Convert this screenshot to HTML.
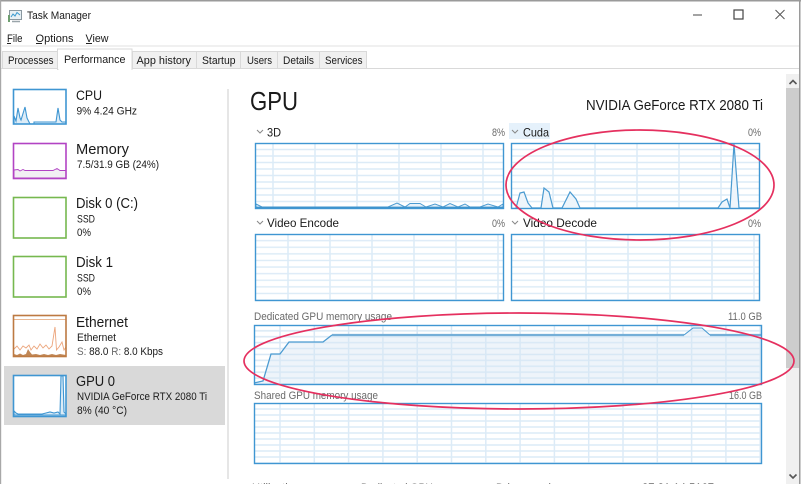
<!DOCTYPE html>
<html><head><meta charset="utf-8"><title>Task Manager</title>
<style>
html,body{margin:0;padding:0;background:#fff;width:801px;height:484px;overflow:hidden}
svg{display:block;filter:blur(0.35px)}
text{font-family:"Liberation Sans",sans-serif;fill:#1a1a1a}
.g{fill:#6a6a6a}
</style></head><body>
<svg width="801" height="484" viewBox="0 0 801 484" xmlns="http://www.w3.org/2000/svg">
<defs>
<pattern id="p3d" patternUnits="userSpaceOnUse" x="252" y="139.75" width="42" height="6.5"><path d="M0 3.25H42M21 0V6.5" stroke="#dcebf7" stroke-width="1.5" fill="none"/></pattern>
<pattern id="pcu" patternUnits="userSpaceOnUse" x="532" y="139.75" width="42" height="6.5"><path d="M0 3.25H42M21 0V6.5" stroke="#dcebf7" stroke-width="1.5" fill="none"/></pattern>
<pattern id="pen" patternUnits="userSpaceOnUse" x="267" y="230.75" width="42" height="6.6"><path d="M0 3.3H42M21 0V6.6" stroke="#dcebf7" stroke-width="1.5" fill="none"/></pattern>
<pattern id="pde" patternUnits="userSpaceOnUse" x="523" y="230.75" width="42" height="6.6"><path d="M0 3.3H42M21 0V6.6" stroke="#dcebf7" stroke-width="1.5" fill="none"/></pattern>
<pattern id="pme" patternUnits="userSpaceOnUse" x="262.85" y="322" width="34.3" height="5.9"><path d="M0 2.95H34.3M17.15 0V5.9" stroke="#d8e8f5" stroke-width="1.5" fill="none"/></pattern>
<pattern id="psh" patternUnits="userSpaceOnUse" x="262.85" y="400" width="34.3" height="6"><path d="M0 3H34.3M17.15 0V6" stroke="#dcebf7" stroke-width="1.5" fill="none"/></pattern>
</defs>

<!-- window frame -->
<rect x="0" y="0" width="801" height="1.5" fill="#9a9a9a"/>
<rect x="0" y="0" width="1.2" height="484" fill="#a8a8a8"/>
<rect x="799" y="0" width="1.5" height="484" fill="#9a9a9a"/>

<!-- title bar -->
<rect x="9.5" y="10.5" width="12" height="9" fill="#e8f0f4" stroke="#8a98a0" stroke-width="1"/>
<path d="M11 17L13 14L15 16L17 12.5L20 15" fill="none" stroke="#3a9ad0" stroke-width="1"/>
<rect x="8" y="15" width="2" height="7" fill="#6f9f70"/>
<path d="M12 21.5H20" stroke="#9aa5aa" stroke-width="1.5"/>
<text x="27" y="19" font-size="11" textLength="64" lengthAdjust="spacingAndGlyphs">Task Manager</text>
<path d="M693 15H702" stroke="#666" stroke-width="1.2"/>
<rect x="734" y="10" width="9" height="9" fill="none" stroke="#444" stroke-width="1.2"/>
<path d="M775.5 10L784.5 19M784.5 10L775.5 19" stroke="#555" stroke-width="1" fill="none"/>

<!-- menu -->
<text x="7" y="42" font-size="11" textLength="15.5" lengthAdjust="spacingAndGlyphs">File</text>
<path d="M7 43.5H11" stroke="#222"/>
<text x="35.5" y="42" font-size="11" textLength="38" lengthAdjust="spacingAndGlyphs">Options</text>
<path d="M36 43.5H42" stroke="#222"/>
<text x="85.5" y="42" font-size="11" textLength="23" lengthAdjust="spacingAndGlyphs">View</text>
<path d="M86 43.5H92" stroke="#222"/>
<rect x="1" y="45" width="798" height="2" fill="#f0f0f0"/>

<!-- tabs -->
<rect x="1" y="68" width="798" height="1" fill="#d9d9d9"/>
<g fill="#f0f0f0" stroke="#d9d9d9" stroke-width="1">
<rect x="2.5" y="51.5" width="55" height="17"/>
<rect x="132.5" y="51.5" width="64" height="17"/>
<rect x="196.5" y="51.5" width="44" height="17"/>
<rect x="240.5" y="51.5" width="37" height="17"/>
<rect x="277.5" y="51.5" width="42" height="17"/>
<rect x="319.5" y="51.5" width="47" height="17"/>
</g>
<rect x="57.5" y="49" width="74.5" height="20.5" fill="#fff" stroke="#d9d9d9"/>
<path d="M58.5 69H131.5" stroke="#fff" stroke-width="2"/>
<text x="8" y="64" font-size="11" textLength="45.5" lengthAdjust="spacingAndGlyphs">Processes</text>
<text x="64" y="63" font-size="11" textLength="61.5" lengthAdjust="spacingAndGlyphs">Performance</text>
<text x="136.5" y="64" font-size="11" textLength="54.5" lengthAdjust="spacingAndGlyphs">App history</text>
<text x="202" y="64" font-size="11" textLength="33.5" lengthAdjust="spacingAndGlyphs">Startup</text>
<text x="247" y="64" font-size="11" textLength="25" lengthAdjust="spacingAndGlyphs">Users</text>
<text x="283" y="64" font-size="11" textLength="31" lengthAdjust="spacingAndGlyphs">Details</text>
<text x="325" y="64" font-size="11" textLength="37.5" lengthAdjust="spacingAndGlyphs">Services</text>

<!-- sidebar divider + selection -->
<rect x="227" y="89" width="2" height="390" fill="#e6e6e6"/>
<rect x="4" y="366" width="221" height="59" fill="#d9d9d9"/>

<!-- CPU thumb -->
<rect x="13.5" y="89.5" width="52.5" height="34.5" fill="#fff"/>
<path d="M14 124V116L16 121L18 108L20 118L21 120L25 107L27 118L29 122L30 124H34V122H56L58 108L60 120L62 122H66V124Z" fill="#dcecf7" stroke="#3f96d2" stroke-width="1.1"/>
<rect x="13.5" y="89.5" width="52.5" height="34.5" fill="none" stroke="#3f96d2" stroke-width="1.6"/>
<text x="76" y="100" font-size="14" textLength="26" lengthAdjust="spacingAndGlyphs">CPU</text>
<text x="76.5" y="114.5" font-size="11" textLength="60.5" lengthAdjust="spacingAndGlyphs">9%  4.24 GHz</text>

<!-- Memory thumb -->
<rect x="13.5" y="143.5" width="52.5" height="35" fill="#fff"/>
<path d="M14 170L18 169.5L20 171L23 169.5L25 170.5H53L57 168.5L60 170.5H66V178H14Z" fill="#f2eff3" stroke="#b244c4" stroke-width="0.9"/>
<rect x="13.5" y="143.5" width="52.5" height="35" fill="none" stroke="#b244c4" stroke-width="1.6"/>
<text x="76" y="154" font-size="15" textLength="53" lengthAdjust="spacingAndGlyphs">Memory</text>
<text x="77" y="168" font-size="11" textLength="82" lengthAdjust="spacingAndGlyphs">7.5/31.9 GB (24%)</text>

<!-- Disk 0 -->
<rect x="13.5" y="197.5" width="52.5" height="40.5" fill="#fff" stroke="#76b84f" stroke-width="1.6"/>
<text x="76" y="208" font-size="14.5" textLength="62" lengthAdjust="spacingAndGlyphs">Disk 0 (C:)</text>
<text x="77" y="222.5" font-size="11" textLength="18" lengthAdjust="spacingAndGlyphs">SSD</text>
<text x="77" y="236" font-size="11" textLength="14" lengthAdjust="spacingAndGlyphs">0%</text>

<!-- Disk 1 -->
<rect x="13.5" y="256.5" width="52.5" height="40.5" fill="#fff" stroke="#76b84f" stroke-width="1.6"/>
<text x="76" y="267" font-size="14.5" textLength="37" lengthAdjust="spacingAndGlyphs">Disk 1</text>
<text x="77" y="281.5" font-size="11" textLength="18" lengthAdjust="spacingAndGlyphs">SSD</text>
<text x="77" y="295" font-size="11" textLength="14" lengthAdjust="spacingAndGlyphs">0%</text>

<!-- Ethernet -->
<rect x="13.5" y="315.5" width="52.5" height="41" fill="#fff"/>
<path d="M14 319.5H66" stroke="#e8b894" stroke-width="1"/>
<path d="M14 349L17 346L20 350L23 346L26 348L29 345L31 350L34 346L37 349L40 344L43 348L46 345L49 349L52 346L55 327L56.5 350L59 347L62 342L64 350L66 347" fill="none" stroke="#eca57c" stroke-width="0.9"/>
<path d="M14 356V354L17 355L20 353.5L23 355L26 354L28 349L30 352L32 354.5L36 354L40 355L44 354L48 355L52 354L56 355L60 354L66 355V356Z" fill="#b97a44" opacity=".9"/>
<rect x="13.5" y="315.5" width="52.5" height="41" fill="none" stroke="#bd7a42" stroke-width="1.6"/>
<text x="76" y="327" font-size="14.5" textLength="52" lengthAdjust="spacingAndGlyphs">Ethernet</text>
<text x="77" y="341" font-size="11" textLength="39" lengthAdjust="spacingAndGlyphs">Ethernet</text>
<text x="77" y="355" font-size="11" textLength="86" lengthAdjust="spacingAndGlyphs"><tspan class="g">S:</tspan> 88.0 <tspan class="g">R:</tspan> 8.0 Kbps</text>

<!-- GPU 0 -->
<rect x="13.5" y="375.5" width="52.5" height="41" fill="#fff"/>
<path d="M14 415V411L16 413L18 414H42L46 413L50 412L54 413L58 412L60 414L61 376L63 376L64 412L66 414V415Z" fill="#dcecf7" stroke="#3f96d2" stroke-width="1.1"/>
<rect x="13.5" y="375.5" width="52.5" height="41" fill="none" stroke="#3f96d2" stroke-width="1.6"/>
<text x="76" y="386" font-size="14.5" textLength="39" lengthAdjust="spacingAndGlyphs">GPU 0</text>
<text x="77" y="400" font-size="11" textLength="130" lengthAdjust="spacingAndGlyphs">NVIDIA GeForce RTX 2080 Ti</text>
<text x="77" y="414" font-size="11" textLength="50" lengthAdjust="spacingAndGlyphs">8%  (40 °C)</text>

<!-- header -->
<text x="250" y="110" font-size="26" textLength="48" lengthAdjust="spacingAndGlyphs">GPU</text>
<text x="586" y="110" font-size="15" textLength="177" lengthAdjust="spacingAndGlyphs">NVIDIA GeForce RTX 2080 Ti</text>

<!-- labels -->
<path d="M257 130L260 133L263 130" fill="none" stroke="#888" stroke-width="1"/>
<text x="267" y="136.5" font-size="12" textLength="14" lengthAdjust="spacingAndGlyphs">3D</text>
<text class="g" x="492" y="136" font-size="11" textLength="13" lengthAdjust="spacingAndGlyphs">8%</text>
<rect x="509" y="123" width="41" height="16" fill="#e5f1fb"/>
<path d="M512 130L515 133L518 130" fill="none" stroke="#888" stroke-width="1"/>
<text x="523" y="136.5" font-size="12" textLength="26" lengthAdjust="spacingAndGlyphs">Cuda</text>
<text class="g" x="748" y="136" font-size="11" textLength="13" lengthAdjust="spacingAndGlyphs">0%</text>
<path d="M257 221L260 224L263 221" fill="none" stroke="#888" stroke-width="1"/>
<text x="267" y="227" font-size="12" textLength="72" lengthAdjust="spacingAndGlyphs">Video Encode</text>
<text class="g" x="492" y="227" font-size="11" textLength="13" lengthAdjust="spacingAndGlyphs">0%</text>
<path d="M512 221L515 224L518 221" fill="none" stroke="#888" stroke-width="1"/>
<text x="523" y="227" font-size="12" textLength="74" lengthAdjust="spacingAndGlyphs">Video Decode</text>
<text class="g" x="748" y="227" font-size="11" textLength="13" lengthAdjust="spacingAndGlyphs">0%</text>
<text class="g" x="254" y="320" font-size="11" textLength="138" lengthAdjust="spacingAndGlyphs">Dedicated GPU memory usage</text>
<text class="g" x="728" y="320" font-size="11" textLength="34" lengthAdjust="spacingAndGlyphs">11.0 GB</text>
<text class="g" x="254" y="399" font-size="11" textLength="124" lengthAdjust="spacingAndGlyphs">Shared GPU memory usage</text>
<text class="g" x="729" y="399" font-size="11" textLength="33" lengthAdjust="spacingAndGlyphs">16.0 GB</text>

<!-- 3D graph -->
<rect x="255.5" y="143.5" width="248" height="65" fill="url(#p3d)"/>
<path d="M256 204L262 207H388L397 203L405 207L410 203.5H420L426 207L435 204L443 207L450 203.5L458 207L465 204L470 207H480L488 204L498 207L503 204V208H256Z" fill="#e8f2fa" stroke="#4b9bd1" stroke-width="1"/>
<path d="M256 207.3H503" stroke="#3f93cc" stroke-width="1.4"/>
<rect x="255.5" y="143.5" width="248" height="65" fill="none" stroke="#3f96d2" stroke-width="1.4"/>

<!-- Cuda graph -->
<rect x="511.5" y="143.5" width="248" height="65" fill="url(#pcu)"/>
<path d="M516 208L520 193L524 192L528 203L532 208H541L544 188L549 192L553 208H562L570 192L576 199L580 208H718L722 202L727 199L730 208L734 144L739 208H759" fill="#eef5fb" stroke="#4b9bd1" stroke-width="1.2"/>
<rect x="511.5" y="143.5" width="248" height="65" fill="none" stroke="#3f96d2" stroke-width="1.4"/>

<!-- Video Encode -->
<rect x="255.5" y="234.5" width="248" height="66" fill="url(#pen)"/>
<rect x="255.5" y="234.5" width="248" height="66" fill="none" stroke="#3f96d2" stroke-width="1.4"/>

<!-- Video Decode -->
<rect x="511.5" y="234.5" width="248" height="66" fill="url(#pde)"/>
<rect x="511.5" y="234.5" width="248" height="66" fill="none" stroke="#3f96d2" stroke-width="1.4"/>

<!-- Dedicated memory -->
<path d="M254 383L263 381L271 354H280L289 342H323L332 335H684L693 328H702L710 335H761V384H254Z" fill="#eef4fa"/>
<rect x="254.5" y="325.5" width="507" height="59" fill="url(#pme)"/>
<path d="M254 383L263 381L271 354H280L289 342H323L332 335" fill="none" stroke="#4b9bd1" stroke-width="1.3"/>
<path d="M332 335H684" fill="none" stroke="#75afd8" stroke-width="2.2"/>
<path d="M684 335L693 328H702L710 335" fill="none" stroke="#4b9bd1" stroke-width="1.1"/>
<path d="M710 335H761" fill="none" stroke="#75afd8" stroke-width="2.2"/>
<rect x="254.5" y="325.5" width="507" height="59" fill="none" stroke="#3f96d2" stroke-width="1.4"/>

<!-- Shared memory -->
<rect x="254.5" y="403.5" width="507" height="60" fill="url(#psh)"/>
<rect x="254.5" y="403.5" width="507" height="60" fill="none" stroke="#3f96d2" stroke-width="1.4"/>

<!-- scrollbar -->
<rect x="786" y="74" width="13" height="410" fill="#f0f0f0"/>
<rect x="786" y="88" width="13" height="280" fill="#cdcdcd"/>
<path d="M789.5 84L793 80.5L796.5 84" fill="none" stroke="#555" stroke-width="1.6"/>
<path d="M789.5 474.5L793 478L796.5 474.5" fill="none" stroke="#555" stroke-width="1.6"/>

<!-- bottom clipped text -->
<text class="g" x="252" y="491" font-size="11" textLength="48" lengthAdjust="spacingAndGlyphs">Utilization</text>
<text class="g" x="361" y="491" font-size="11" textLength="112" lengthAdjust="spacingAndGlyphs">Dedicated GPU memory</text>
<text class="g" x="496" y="491" font-size="11" textLength="70" lengthAdjust="spacingAndGlyphs">Driver version:</text>
<text x="642" y="491" font-size="11" textLength="72" lengthAdjust="spacingAndGlyphs">27.21.14.5167</text>

<!-- annotations -->
<ellipse cx="640" cy="185" rx="134" ry="55" fill="none" stroke="#e5305f" stroke-width="1.7"/>
<ellipse cx="519" cy="361" rx="275" ry="48" fill="none" stroke="#e5305f" stroke-width="1.7"/>
</svg>
</body></html>
